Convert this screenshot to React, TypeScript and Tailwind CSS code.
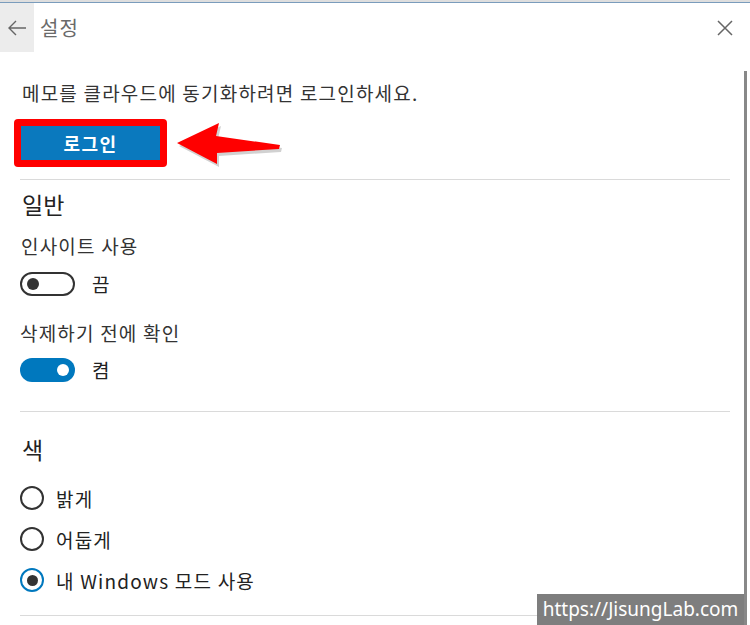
import React from "react";

const font = { fontFamily: '"Noto Sans CJK KR", "Noto Sans", sans-serif' };

function Toggle({ on }: { on: boolean }) {
  if (on) {
    return (
      <div className="w-[55px] h-[24px] rounded-full bg-[#0078be] flex items-center justify-end pr-[6px]">
        <div className="w-[12px] h-[12px] rounded-full bg-white" />
      </div>
    );
  }
  return (
    <div className="w-[55px] h-[24px] rounded-full border-2 border-[#333] flex items-center pl-[5px] box-border">
      <div className="w-[12px] h-[12px] rounded-full bg-[#333]" />
    </div>
  );
}

function Radio({ checked, label }: { checked?: boolean; label: string }) {
  return (
    <div className="flex items-center h-[24px]">
      {checked ? (
        <div className="w-[24px] h-[24px] rounded-full border-2 border-[#0078be] flex items-center justify-center box-border">
          <div className="w-[11px] h-[11px] rounded-full bg-[#333]" />
        </div>
      ) : (
        <div className="w-[24px] h-[24px] rounded-full border-2 border-[#333] box-border" />
      )}
      <span className="ml-[12px] text-[19px] tracking-[1.2px] text-[#222] leading-none">{label}</span>
    </div>
  );
}

export default function App() {
  return (
    <div className="relative w-[750px] h-[625px] bg-white overflow-hidden" style={font}>
      <div className="h-[3px] bg-[#dedede] border-b border-[#7a9cbc]" />
      <div className="flex items-center h-[49px]">
        <div className="w-[34px] h-full bg-[#ececec] flex items-center justify-center">
          <svg width="20" height="16" viewBox="0 0 20 16" fill="none" stroke="#666" strokeWidth="1.4">
            <path d="M19 8H2M9 1L2 8l7 7" />
          </svg>
        </div>
        <span className="ml-[6px] text-[20px] tracking-[1px] text-[#6a6a6a] leading-none">설정</span>
        <div className="ml-auto mr-[16px]">
          <svg width="18" height="18" viewBox="0 0 18 18" stroke="#666" strokeWidth="1.5">
            <path d="M2 2l14 14M16 2L2 16" />
          </svg>
        </div>
      </div>

      <div className="pl-[20px] pr-[20px]">
        <div className="mt-[30px] ml-[2px] text-[19px] tracking-[1.2px] text-[#333] leading-[22px] whitespace-nowrap">
          메모를 클라우드에 동기화하려면 로그인하세요.
        </div>
        <div className="mt-[15px] ml-[-6px] w-[153px] h-[48px] rounded-[4px] bg-[#ff0000] p-[7px] box-border">
          <div className="w-full h-full bg-[#0a79be] flex items-center justify-center text-white font-bold text-[18px] tracking-[1.5px]">
            로그인
          </div>
        </div>
        <div className="mt-[12px] h-px bg-[#dadada] w-[710px]" />

        <div className="mt-[10px] ml-[2px] text-[23px] text-[#222] leading-[28px]">일반</div>
        <div className="mt-[17px] ml-[1px] text-[19px] tracking-[1.2px] text-[#333] leading-[22px]">인사이트 사용</div>
        <div className="mt-[15px] flex items-center">
          <Toggle on={false} />
          <span className="ml-[17px] text-[19px] text-[#222] leading-[24px]">끔</span>
        </div>
        <div className="mt-[26px] text-[19px] tracking-[1.2px] text-[#333] leading-[22px]">삭제하기 전에 확인</div>
        <div className="mt-[14px] flex items-center">
          <Toggle on={true} />
          <span className="ml-[17px] text-[19px] text-[#222] leading-[24px]">켬</span>
        </div>
        <div className="mt-[29px] h-px bg-[#dadada] w-[710px]" />

        <div className="mt-[23px] ml-[2px] text-[23px] text-[#222] leading-[28px]">색</div>
        <div className="mt-[23px] flex flex-col gap-[17px]">
          <Radio label="밝게" />
          <Radio label="어둡게" />
          <Radio checked label="내 Windows 모드 사용" />
        </div>
        <div className="mt-[23px] h-px bg-[#dadada] w-[710px]" />
      </div>

      <svg className="absolute left-[170px] top-[118px]" width="120" height="56" viewBox="170 118 120 56">
        <g transform="translate(2,3)" fill="#000" opacity="0.18">
          <path d="M177 143 L219 123 L216 136 L280 145 L279 149 L217 153 L217 164 Z" />
        </g>
        <path d="M177 143 L219 123 L216 136 L280 145 L279 149 L217 153 L217 164 Z" fill="#ff0000" />
      </svg>

      <div className="absolute right-[3px] top-[71px] bottom-0 w-[3px] bg-[#888]" />

      <div className="absolute left-[537px] top-[594px] w-[207px] h-[31px] bg-[#777]/95 flex items-center justify-center text-white text-[19px]" style={{ fontFamily: '"Noto Sans", sans-serif' }}>
        https://JisungLab.com
      </div>
    </div>
  );
}
